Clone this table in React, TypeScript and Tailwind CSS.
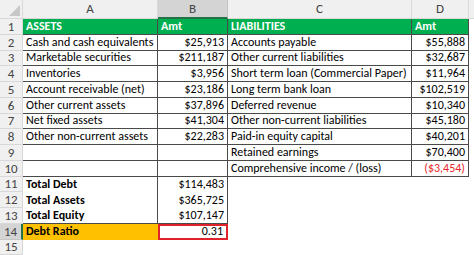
import type { ReactNode } from 'react';

type CellProps = {
  children?: ReactNode;
  className?: string;
};

const Cell = ({ children, className = '' }: CellProps) => (
  <div className={`flex items-center overflow-hidden whitespace-nowrap px-[3px] leading-[15px] ${className}`}>{children}</div>
);

const RowHead = ({ n, active }: { n: number; active?: boolean }) => (
  <div
    className={`flex items-center justify-center border-b border-r text-[13px] leading-[15px] text-[#444] ${
      active ? 'bg-[#d4d4d4] border-r-[#217346] border-r-2 border-b-[#c6c6c6]' : 'bg-[#f0f0f0] border-[#d8d8d8]'
    }`}
  >
    {n}
  </div>
);

const rows: [string, string, string, string][] = [
  ['Cash and cash equivalents', '$25,913', 'Accounts payable', '$55,888'],
  ['Marketable securities', '$211,187', 'Other current liabilities', '$32,687'],
  ['Inventories', '$3,956', 'Short term loan (Commercial Paper)', '$11,964'],
  ['Account receivable (net)', '$23,186', 'Long term bank loan', '$102,519'],
  ['Other current assets', '$37,896', 'Deferred revenue', '$10,340'],
  ['Net fixed assets', '$41,304', 'Other non-current liabilities', '$45,180'],
  ['Other non-current assets', '$22,283', 'Paid-in equity capital', '$40,201'],
  ['', '', 'Retained earnings', '$70,400'],
  ['', '', 'Comprehensive income / (loss)', '($3,454)'],
];

const totals: [string, string][] = [
  ['Total Debt', '$114,483'],
  ['Total Assets', '$365,725'],
  ['Total Equity', '$107,147'],
];

const line = 'border-[#4a4a4a]';

export default function App() {
  return (
    <div
      className="w-[474px] h-[255px] overflow-hidden bg-white text-[12px] text-black"
      style={{ fontFamily: '"Carlito", "Liberation Sans Narrow", "Liberation Sans", sans-serif' }}
    >
      <div className="grid grid-cols-[23px_135px_70px_184px_57px_1fr] grid-rows-[19px_repeat(15,15.75px)]">
        {/* column headers */}
        <div className="relative bg-[#f0f0f0] border-r border-b border-[#d8d8d8]">
          <div className="absolute right-[2px] bottom-[2px] w-0 h-0 border-l-[11px] border-l-transparent border-b-[11px] border-b-[#c8c8c8]" />
        </div>
        <div className="flex items-center justify-center bg-[#f0f0f0] border-r border-b border-[#d8d8d8] text-[13px] text-[#444]">A</div>
        <div className="flex items-center justify-center bg-[#d4d4d4] border-r border-[#c0c0c0] border-b-2 border-b-[#217346] text-[13px] text-[#444]">B</div>
        <div className="flex items-center justify-center bg-[#f0f0f0] border-r border-b border-[#d8d8d8] text-[13px] text-[#444]">C</div>
        <div className="flex items-center justify-center bg-[#f0f0f0] border-r border-b border-[#d8d8d8] text-[13px] text-[#444]">D</div>
        <div className="bg-[#f0f0f0] border-b border-[#d8d8d8]" />

        {/* row 1 */}
        <RowHead n={1} />
        <Cell className={`bg-[#00b050] text-white font-bold border-r border-b ${line}`}>ASSETS</Cell>
        <Cell className={`bg-[#00b050] text-white font-bold border-r border-b ${line}`}>Amt</Cell>
        <Cell className={`bg-[#00b050] text-white font-bold border-r border-b ${line}`}>LIABILITIES</Cell>
        <Cell className={`bg-[#00b050] text-white font-bold border-r border-b ${line}`}>Amt</Cell>
        <div />

        {rows.map(([a, b, c, d], i) => (
          <div key={i} className="contents">
            <RowHead n={i + 2} />
            <Cell className={`border-r border-b ${line}`}>{a}</Cell>
            <Cell className={`justify-end border-r border-b ${line}`}>{b}</Cell>
            <Cell className={`border-r border-b ${line}`}>{c}</Cell>
            <Cell className={`justify-end border-r border-b ${line} ${d.startsWith('(') ? 'text-[#e8262b]' : ''}`}>{d}</Cell>
            <div />
          </div>
        ))}

        {totals.map(([label, value], i) => (
          <div key={label} className="contents">
            <RowHead n={i + 11} />
            <Cell className={`font-bold border-r ${line} ${i === 2 ? `border-b ${line}` : ''}`}>{label}</Cell>
            <Cell className={`justify-end border-r ${line} ${i === 2 ? `border-b ${line}` : ''}`}>{value}</Cell>
            <div />
            <div />
            <div />
          </div>
        ))}

        {/* row 14 */}
        <RowHead n={14} active />
        <Cell className="bg-[#ffc000] font-bold">Debt Ratio</Cell>
        <Cell className="justify-end border-2 border-[#e0222b]">0.31</Cell>
        <div />
        <div />
        <div />

        {/* row 15 */}
        <RowHead n={15} />
        <div />
        <div />
        <div />
        <div />
        <div />
      </div>
    </div>
  );
}
